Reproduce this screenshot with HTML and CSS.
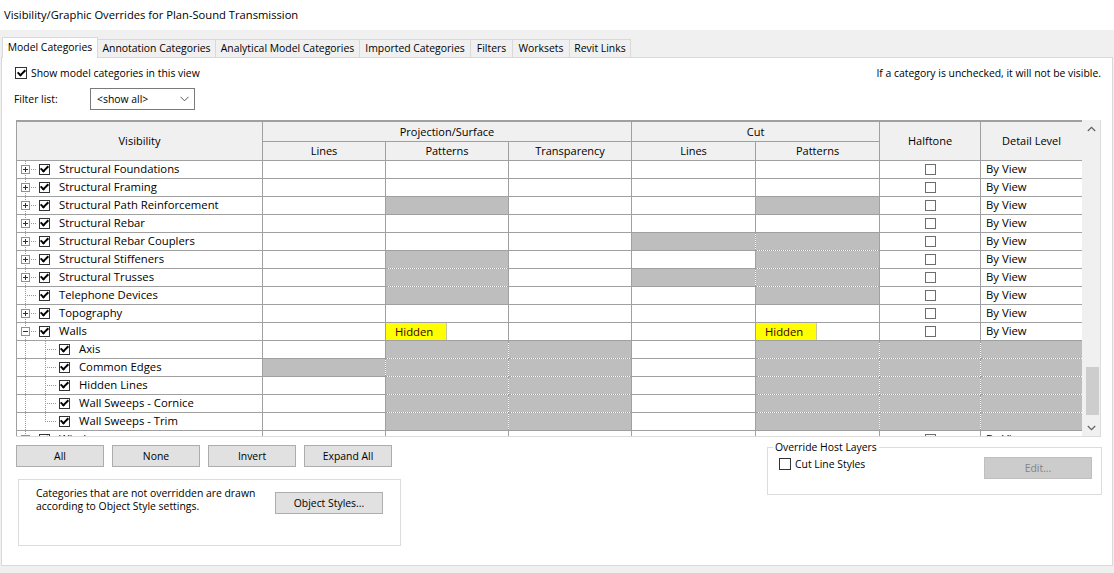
FILE: index.html
```html
<!DOCTYPE html>
<html lang="en">
<head>
    <meta charset="UTF-8">
    <title>Visibility/Graphic Overrides for Plan-Sound Transmission</title>
    <link rel="stylesheet" href="styles.css">
</head>
<body>
    <div class="titlebar">Visibility/Graphic Overrides for Plan-Sound Transmission</div>

    <div class="tabs">
        <div class="tab active">Model Categories</div>
        <div class="tab">Annotation Categories</div>
        <div class="tab">Analytical Model Categories</div>
        <div class="tab">Imported Categories</div>
        <div class="tab">Filters</div>
        <div class="tab">Worksets</div>
        <div class="tab">Revit Links</div>
    </div>

    <div class="panel">
        <div class="top-row">
            <label class="check-label"><span class="cb big on"></span>Show model categories in this view</label>
            <span class="hint">If a category is unchecked, it will not be visible.</span>
        </div>

        <div class="filter-row">
            <span class="filter-label">Filter list:</span>
            <div class="select">
                <span>&lt;show all&gt;</span>
                <svg width="9" height="6" viewBox="0 0 9 6"><path d="M0.5 0.8 L4.5 4.8 L8.5 0.8" fill="none" stroke="#555" stroke-width="1"/></svg>
            </div>
        </div>

        <div class="grid">
            <div class="grid-body">
                <table>
                    <colgroup>
                        <col class="c-vis"><col class="c-col"><col class="c-col"><col class="c-col">
                        <col class="c-cut"><col class="c-cut"><col class="c-ht"><col class="c-dl">
                    </colgroup>
                    <thead>
                        <tr class="head1">
                            <th rowspan="2">Visibility</th>
                            <th colspan="3">Projection/Surface</th>
                            <th colspan="2">Cut</th>
                            <th rowspan="2">Halftone</th>
                            <th rowspan="2">Detail Level</th>
                        </tr>
                        <tr class="head2">
                            <th>Lines</th><th>Patterns</th><th>Transparency</th><th>Lines</th><th>Patterns</th>
                        </tr>
                    </thead>
                    <tbody>
                        <tr>
                            <td><div class="node"><span class="guide tee"><span class="tw plus"></span></span><span class="cb on"></span><span class="name">Structural Foundations</span></div></td>
                            <td></td><td></td><td></td><td></td><td></td>
                            <td class="ht"><span class="cb"></span></td><td class="dl">By View</td>
                        </tr>
                        <tr>
                            <td><div class="node"><span class="guide tee"><span class="tw plus"></span></span><span class="cb on"></span><span class="name">Structural Framing</span></div></td>
                            <td></td><td></td><td></td><td></td><td></td>
                            <td class="ht"><span class="cb"></span></td><td class="dl">By View</td>
                        </tr>
                        <tr>
                            <td><div class="node"><span class="guide tee"><span class="tw plus"></span></span><span class="cb on"></span><span class="name">Structural Path Reinforcement</span></div></td>
                            <td></td><td class="h"></td><td></td><td></td><td class="h"></td>
                            <td class="ht"><span class="cb"></span></td><td class="dl">By View</td>
                        </tr>
                        <tr>
                            <td><div class="node"><span class="guide tee"><span class="tw plus"></span></span><span class="cb on"></span><span class="name">Structural Rebar</span></div></td>
                            <td></td><td></td><td></td><td></td><td></td>
                            <td class="ht"><span class="cb"></span></td><td class="dl">By View</td>
                        </tr>
                        <tr>
                            <td><div class="node"><span class="guide tee"><span class="tw plus"></span></span><span class="cb on"></span><span class="name">Structural Rebar Couplers</span></div></td>
                            <td></td><td></td><td></td><td class="h"></td><td class="h"></td>
                            <td class="ht"><span class="cb"></span></td><td class="dl">By View</td>
                        </tr>
                        <tr>
                            <td><div class="node"><span class="guide tee"><span class="tw plus"></span></span><span class="cb on"></span><span class="name">Structural Stiffeners</span></div></td>
                            <td></td><td class="h"></td><td></td><td></td><td class="h"></td>
                            <td class="ht"><span class="cb"></span></td><td class="dl">By View</td>
                        </tr>
                        <tr>
                            <td><div class="node"><span class="guide tee"><span class="tw plus"></span></span><span class="cb on"></span><span class="name">Structural Trusses</span></div></td>
                            <td></td><td class="h"></td><td></td><td class="h"></td><td class="h"></td>
                            <td class="ht"><span class="cb"></span></td><td class="dl">By View</td>
                        </tr>
                        <tr>
                            <td><div class="node"><span class="guide tee"></span><span class="cb on"></span><span class="name">Telephone Devices</span></div></td>
                            <td></td><td class="h"></td><td></td><td></td><td class="h"></td>
                            <td class="ht"><span class="cb"></span></td><td class="dl">By View</td>
                        </tr>
                        <tr>
                            <td><div class="node"><span class="guide tee"><span class="tw plus"></span></span><span class="cb on"></span><span class="name">Topography</span></div></td>
                            <td></td><td></td><td></td><td></td><td></td>
                            <td class="ht"><span class="cb"></span></td><td class="dl">By View</td>
                        </tr>
                        <tr>
                            <td><div class="node open"><span class="guide tee"><span class="tw"></span></span><span class="cb on"></span><span class="name">Walls</span></div></td>
                            <td></td><td class="mark-cell"><span class="mark">Hidden</span></td><td></td><td></td><td class="mark-cell"><span class="mark">Hidden</span></td>
                            <td class="ht"><span class="cb"></span></td><td class="dl">By View</td>
                        </tr>
                        <tr>
                            <td><div class="node"><span class="guide pipe"></span><span class="guide tee"></span><span class="cb on"></span><span class="name">Axis</span></div></td>
                            <td></td><td class="h"></td><td class="h"></td><td></td><td class="h"></td>
                            <td class="h"></td><td class="h"></td>
                        </tr>
                        <tr>
                            <td><div class="node"><span class="guide pipe"></span><span class="guide tee"></span><span class="cb on"></span><span class="name">Common Edges</span></div></td>
                            <td class="h"></td><td class="h"></td><td class="h"></td><td></td><td class="h"></td>
                            <td class="h"></td><td class="h"></td>
                        </tr>
                        <tr>
                            <td><div class="node"><span class="guide pipe"></span><span class="guide tee"></span><span class="cb on"></span><span class="name">Hidden Lines</span></div></td>
                            <td></td><td class="h"></td><td class="h"></td><td></td><td class="h"></td>
                            <td class="h"></td><td class="h"></td>
                        </tr>
                        <tr>
                            <td><div class="node"><span class="guide pipe"></span><span class="guide tee"></span><span class="cb on"></span><span class="name">Wall Sweeps - Cornice</span></div></td>
                            <td></td><td class="h"></td><td class="h"></td><td></td><td class="h"></td>
                            <td class="h"></td><td class="h"></td>
                        </tr>
                        <tr>
                            <td><div class="node"><span class="guide pipe"></span><span class="guide ell"></span><span class="cb on"></span><span class="name">Wall Sweeps - Trim</span></div></td>
                            <td></td><td class="h"></td><td class="h"></td><td></td><td class="h"></td>
                            <td class="h"></td><td class="h"></td>
                        </tr>
                        <tr>
                            <td><div class="node"><span class="guide tee"><span class="tw plus"></span></span><span class="cb on"></span><span class="name">Windows</span></div></td>
                            <td></td><td></td><td></td><td></td><td></td>
                            <td class="ht"><span class="cb"></span></td><td class="dl">By View</td>
                        </tr>
                    </tbody>
                </table>
            </div>
            <div class="vscroll">
                <div class="arrow">
                    <svg width="9" height="6" viewBox="0 0 9 6"><path d="M0.8 5 L4.5 1.3 L8.2 5" fill="none" stroke="#606060" stroke-width="1.2"/></svg>
                </div>
                <div class="track"><div class="thumb"></div></div>
                <div class="arrow">
                    <svg width="9" height="6" viewBox="0 0 9 6"><path d="M0.8 1 L4.5 4.7 L8.2 1" fill="none" stroke="#606060" stroke-width="1.2"/></svg>
                </div>
            </div>
        </div>

        <div class="bottom">
            <div class="left-col">
                <div class="btn-row">
                    <button class="btn">All</button>
                    <button class="btn">None</button>
                    <button class="btn">Invert</button>
                    <button class="btn">Expand All</button>
                </div>
                <div class="note-box">
                    <p>Categories that are not overridden are drawn<br>according to Object Style settings.</p>
                    <button class="btn wide">Object Styles...</button>
                </div>
            </div>

            <fieldset class="host">
                <legend>Override Host Layers</legend>
                <div class="host-row">
                    <label class="check-label"><span class="cb big"></span>Cut Line Styles</label>
                    <button class="btn wide disabled">Edit...</button>
                </div>
            </fieldset>
        </div>
    </div>
</body>
</html>
```

FILE: styles.css
```css
* {
    box-sizing: border-box;
}

body {
    margin: 0;
    width: 1114px;
    height: 573px;
    overflow: hidden;
    background-color: #f0f0f0;
    font-family: "Open Sans", "Noto Sans", sans-serif;
    font-size: 10.4px;
    color: #000;
}

.titlebar {
    height: 30px;
    padding: 0 4px;
    line-height: 30px;
    font-size: 11.2px;
    background-color: #fff;
}

/* pestañas */
.tabs {
    display: flex;
    align-items: flex-end;
    height: 27px;
    padding-left: 2px;
}

.tab {
    height: 18px;
    line-height: 17px;
    text-align: center;
    white-space: nowrap;
    background-color: #f0f0f0;
    border: 1px solid #d9d9d9;
    border-left: none;
    border-bottom: none;
}

.tab.active {
    position: relative;
    z-index: 1;
    height: 21px;
    margin-bottom: -1px;
    line-height: 19px;
    background-color: #fff;
    border-left: 1px solid #d9d9d9;
}

.tab:nth-child(1) { width: 96px; }
.tab:nth-child(2) { width: 118px; }
.tab:nth-child(3) { width: 144px; }
.tab:nth-child(4) { width: 111px; }
.tab:nth-child(5) { width: 42px; }
.tab:nth-child(6) { width: 57px; }
.tab:nth-child(7) { width: 61px; }

.panel {
    height: 509px;
    margin: 0 1px;
    padding: 7px 11px 0 12px;
    background-color: #fff;
    border: 1px solid #d9d9d9;
}

.top-row {
    display: flex;
    justify-content: space-between;
    align-items: center;
    height: 16px;
}

.check-label {
    display: flex;
    align-items: center;
    gap: 4px;
    margin-left: 1px;
    line-height: 12px;
}

/* casillas */
.cb {
    display: inline-flex;
    justify-content: center;
    align-items: center;
    flex: none;
    width: 11px;
    height: 11px;
    background-color: #fff;
    border: 1px solid #333;
}

.cb.big {
    width: 12px;
    height: 12px;
}

.cb.on::after {
    content: "";
    display: block;
    width: 3px;
    height: 6px;
    margin-top: -2px;
    border: solid #000;
    border-width: 0 2px 2px 0;
    transform: rotate(45deg);
}

.filter-row {
    display: flex;
    align-items: center;
    height: 22px;
    margin-top: 7px;
}

.filter-label {
    width: 76px;
}

.select {
    display: flex;
    justify-content: space-between;
    align-items: center;
    width: 105px;
    height: 22px;
    padding: 0 5px 0 6px;
    border: 1px solid #7a7a7a;
}

/* tabla */
.grid {
    display: flex;
    height: 317px;
    margin-top: 10px;
    margin-left: 2px;
    border-right: 1px solid #dcdcdc;
    border-bottom: 1px solid #dcdcdc;
    font-size: 11px;
}

.grid-body {
    width: 1066px;
    height: 316px;
    overflow: hidden;
}

.grid table {
    width: 1066px;
    table-layout: fixed;
    border-collapse: collapse;
    border-top: 2px solid #a0a0a0;
}

.c-vis { width: 246px; }
.c-col { width: 123px; }
.c-cut { width: 124px; }
.c-ht { width: 101px; }
.c-dl { width: 102px; }

.grid th,
.grid td {
    padding: 0;
    border: 1px solid #a0a0a0;
    white-space: nowrap;
    overflow: hidden;
}

.grid th {
    font-weight: normal;
    background-color: #f0f0f0;
}

.head1 { height: 20px; }
.head2 { height: 19px; }

.grid tbody tr {
    height: 18px;
}

.grid td {
    font-size: 11.3px;
    line-height: 16px;
    vertical-align: middle;
}

/* trama gris de celdas no editables */
.grid td.h {
    border-style: dotted;
    background: repeating-conic-gradient(#969696 0 25%, #e6e6e6 0 50%) 0 0 / 2px 2px;
}

.ht {
    text-align: center;
}

.ht .cb {
    border-color: #6d6d6d;
    vertical-align: middle;
}

.dl {
    padding-left: 5px !important;
}

.mark-cell {
    vertical-align: top !important;
}

.mark {
    display: block;
    width: 61px;
    height: 17px;
    padding-left: 9px;
    line-height: 17px;
    color: #3a0000;
    background-color: #ffff00;
    border-right: 1px solid #c8c8a0;
}

/* árbol */
.node {
    display: flex;
    align-items: center;
    height: 17px;
}

.node.open {
    background: repeating-linear-gradient(to bottom, #999 0 1px, transparent 1px 2px) 28px 13px / 1px 5px no-repeat;
}

.guide {
    display: flex;
    align-items: center;
    flex: none;
    width: 20px;
    height: 17px;
    margin-right: 2px;
}

.guide + .guide {
    margin-left: -2px;
}

.guide.tee {
    background:
        repeating-linear-gradient(to bottom, #999 0 1px, transparent 1px 2px) 8px 0 / 1px 100% no-repeat,
        repeating-linear-gradient(to right, #999 0 1px, transparent 1px 2px) 8px 8px / 12px 1px no-repeat;
}

.guide.pipe {
    background: repeating-linear-gradient(to bottom, #999 0 1px, transparent 1px 2px) 8px 0 / 1px 100% no-repeat;
}

.guide.ell {
    background:
        repeating-linear-gradient(to bottom, #999 0 1px, transparent 1px 2px) 8px 0 / 1px 9px no-repeat,
        repeating-linear-gradient(to right, #999 0 1px, transparent 1px 2px) 8px 8px / 12px 1px no-repeat;
}

.tw {
    width: 9px;
    height: 9px;
    margin-left: 4px;
    border: 1px solid #919191;
    background: linear-gradient(#1a2f6a, #1a2f6a) center / 5px 1px no-repeat, #fff;
}

.tw.plus {
    background:
        linear-gradient(#1a2f6a, #1a2f6a) center / 5px 1px no-repeat,
        linear-gradient(#1a2f6a, #1a2f6a) center / 1px 5px no-repeat,
        #fff;
}

.name {
    margin-left: 9px;
}

/* barra de desplazamiento */
.vscroll {
    flex: 1;
    display: flex;
    flex-direction: column;
    background-color: #f0f0f0;
}

.arrow {
    display: flex;
    justify-content: center;
    align-items: center;
    height: 17px;
}

.track {
    flex: 1;
    padding: 0 1px 0 4px;
}

.thumb {
    height: 48px;
    margin-top: 230px;
    background-color: #cdcdcd;
}

/* parte inferior */
.bottom {
    display: flex;
    justify-content: space-between;
    align-items: flex-start;
    margin-top: 8px;
    margin-left: 2px;
}

.btn-row {
    display: flex;
    gap: 8px;
}

.btn {
    width: 88px;
    height: 22px;
    padding: 0;
    font: inherit;
    color: #000;
    background-color: #e1e1e1;
    border: 1px solid #adadad;
}

.btn.wide {
    width: 108px;
}

.btn.disabled {
    color: #838383;
    background-color: #cccccc;
    border-color: #bfbfbf;
}

.note-box {
    display: flex;
    justify-content: space-between;
    align-items: flex-start;
    width: 383px;
    height: 67px;
    margin: 12px 0 0 2px;
    padding: 7px 17px 0 17px;
    border: 1px solid #dcdcdc;
}

.note-box p {
    margin: 0;
    line-height: 13px;
}

.note-box .btn {
    margin-top: 5px;
}

.host {
    width: 335px;
    margin: -5px -1px 0 0;
    padding: 3px 9px 15px 10px;
    border: 1px solid #dcdcdc;
}

.host legend {
    margin-left: -5px;
    padding: 0 2px;
    line-height: 14px;
}

.host-row {
    display: flex;
    justify-content: space-between;
    align-items: flex-start;
}

.host-row .check-label {
    margin-top: 1px;
}
```
